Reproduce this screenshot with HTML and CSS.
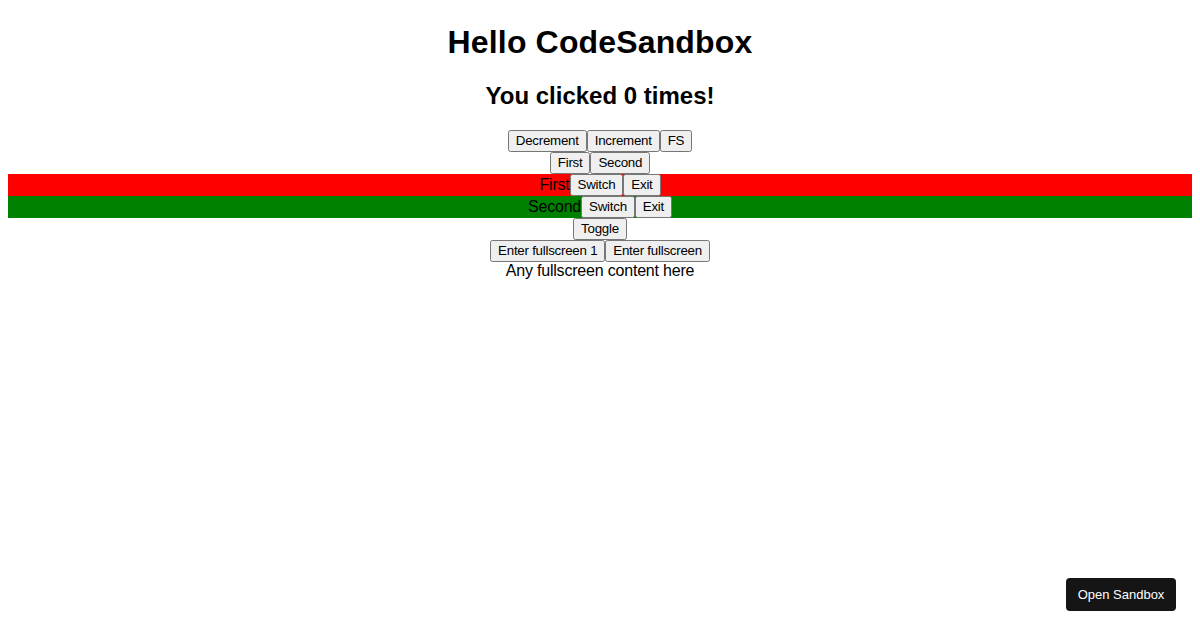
FILE: index.html
```html
<!DOCTYPE html>
<html>
<head>
<meta charset="utf-8">
<link rel="stylesheet" href="styles.css">
</head>
<body>
<div class="app">
<h1>Hello CodeSandbox</h1>
<h2>You clicked 0 times!</h2>
<div class="row"><button>Decrement</button><button>Increment</button><button>FS</button></div>
<div class="row"><button>First</button><button>Second</button></div>
<div class="row red">First<button>Switch</button><button>Exit</button></div>
<div class="row green">Second<button>Switch</button><button>Exit</button></div>
<div class="row"><button>Toggle</button></div>
<div class="row"><button>Enter fullscreen 1</button><button>Enter fullscreen</button></div>
<div class="content">Any fullscreen content here</div>
</div>
<a class="open-sandbox">Open Sandbox</a>
</body>
</html>
```
FILE: styles.css
```css
body {
  margin: 8px;
  font-family: "Liberation Sans", Arial, sans-serif;
}
.app {
  text-align: center;
}
h1 {
  margin: 16px 0 21px;
  letter-spacing: 0.15px;
}
h2 {
  margin: 21px 0 20px;
}
.row {
  display: flex;
  justify-content: center;
  align-items: center;
  height: 22px;
  letter-spacing: -0.2px;
}
button {
  font-family: "Liberation Sans", Arial, sans-serif;
  font-size: 13.333px;
  line-height: 16px;
  height: 22px;
  padding: 1px 6px;
  letter-spacing: -0.25px;
}
.content {
  letter-spacing: -0.2px;
}
.red {
  background: red;
}
.green {
  background: green;
}
.open-sandbox {
  position: fixed;
  right: 24px;
  bottom: 19px;
  box-sizing: border-box;
  width: 110px;
  height: 33px;
  line-height: 33px;
  background: #151515;
  color: #fff;
  font-size: 13px;
  border-radius: 4px;
  text-align: center;
  white-space: nowrap;
}
```
